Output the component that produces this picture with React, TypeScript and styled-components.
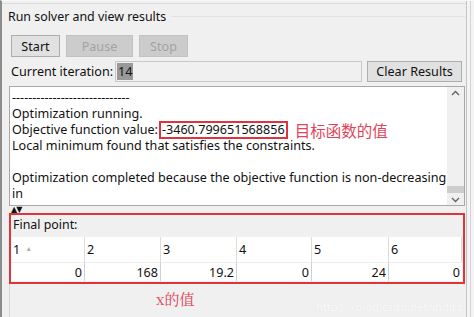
import React from 'react'
import styled, { createGlobalStyle } from 'styled-components'

const GlobalStyle = createGlobalStyle`
  html, body {
    margin: 0;
    padding: 0;
    background: #f0f0f0;
  }
  body {
    font-family: "Noto Sans", "Open Sans", sans-serif;
    font-size: 12.4px;
    color: #111;
  }
`

const Window = styled.div`
  position: relative;
  width: 474px;
  height: 317px;
  overflow: hidden;
  box-sizing: border-box;
  background: #f0f0f0;
  border-left: 2px solid #8c8c8c;
  border-top: 1px solid #f8f8f8;
`

const Edge = styled.div`
  position: absolute;
  top: 0;
  bottom: 0;
  right: 0;
  width: 7px;
  border-left: 1px solid #c4c4c4;
  background: #f4f4f4;
  &::after {
    content: '';
    position: absolute;
    top: 0;
    bottom: 0;
    left: 3px;
    border-left: 1px solid #d4d4d4;
  }
`

const Inner = styled.div`
  width: 463px;
  padding-left: 6px;
  box-sizing: border-box;
  white-space: nowrap;
`

const TopRule = styled.div`
  height: 2px;
  border-bottom: 1px solid #dcdcdc;
  margin-left: -6px;
`

const TitleRow = styled.div`
  display: flex;
  align-items: center;
  gap: 6px;
  height: 24px;
  &::after {
    content: '';
    flex: 1;
    border-top: 1px solid #e0e0e0;
  }
`

const ButtonRow = styled.div`
  display: flex;
  gap: 6px;
  margin-top: 7px;
  padding-left: 3px;
`

const Button = styled.button<{ $disabled?: boolean; $w: number }>`
  width: ${p => p.$w}px;
  height: 22px;
  box-sizing: border-box;
  padding: 0;
  font-family: inherit;
  font-size: 12.6px;
  background: ${p => (p.$disabled ? '#cccccc' : '#e1e1e1')};
  border: 1px solid ${p => (p.$disabled ? '#c2c2c2' : '#adadad')};
  color: ${p => (p.$disabled ? '#a3a3a3' : '#111')};
`

const IterRow = styled.div`
  display: flex;
  align-items: center;
  margin-top: 4px;
  padding-left: 3px;
  height: 21px;
`

const Label = styled.span`
  width: 104px;
  font-size: 12.6px;
`

const Field = styled.div`
  width: 247px;
  height: 21px;
  box-sizing: border-box;
  border: 1px solid #c8c8c8;
  background: #f0f0f0;
  display: flex;
  align-items: center;
  padding-left: 1px;
`

const Selected = styled.span`
  background: #999999;
  color: #111;
  padding: 0 1px;
  line-height: 17px;
  font-size: 12.6px;
`

const ClearButton = styled(Button)`
  margin-left: 5px;
  height: 21px;
`

const Output = styled.div`
  margin-top: 4px;
  margin-left: 1px;
  height: 120px;
  box-sizing: border-box;
  border: 1px solid #a8a8a8;
  background: #fff;
  display: flex;
`

const OutputText = styled.div`
  flex: 1;
  padding: 3px 0 0 2px;
  font-size: 12.6px;
  line-height: 16px;
  overflow: hidden;
`

const Line = styled.div`
  display: flex;
  align-items: center;
  height: 16px;
`

const ValueBox = styled.span`
  border: 2px solid #e0343c;
  padding: 0 1px;
  line-height: 14px;
  margin-left: 1px;
`

const Note = styled.span`
  color: #e2445a;
  font-family: "Noto Sans CJK SC", sans-serif;
  font-size: 15.5px;
  margin-left: 7px;
`

const Scrollbar = styled.div`
  width: 17px;
  background: #f0f0f0;
  display: flex;
  flex-direction: column;
  align-items: center;
  justify-content: space-between;
  padding: 3px 0 2px;
  box-sizing: border-box;
`

const Thumb = styled.div`
  width: 17px;
  height: 7px;
  background: #cdcdcd;
  margin-top: auto;
  margin-bottom: 4px;
`

const Splitter = styled.div`
  height: 7px;
  padding-left: 3px;
  display: flex;
  align-items: center;
  font-family: "DejaVu Sans", sans-serif;
  font-size: 8px;
  line-height: 7px;
  letter-spacing: -1px;
`

const FinalBox = styled.div`
  margin-left: 1px;
  height: 71px;
  box-sizing: border-box;
  border: 2px solid #e0343c;
  background: #f0f0f0;
`

const FinalTitle = styled.div`
  height: 22px;
  line-height: 20px;
  padding-left: 2px;
`

const Table = styled.div`
  display: grid;
  grid-template-columns: 74px 76px 76px 75px 77px 1fr;
  background: #fff;
  margin-right: 1px;
`

const HeadCell = styled.div`
  height: 25px;
  display: flex;
  align-items: center;
  padding-left: 2px;
  font-size: 12.6px;
  border-right: 1px solid #dcdcdc;
  &:last-of-type {
    border-right: none;
  }
`

const SortMark = styled.span`
  color: #b0b0b0;
  font-size: 7px;
  margin-left: 5px;
  margin-top: -3px;
`

const DataCell = styled.div`
  height: 18px;
  display: flex;
  align-items: center;
  justify-content: flex-end;
  padding-right: 2px;
  font-size: 12.6px;
  border-top: 1px solid #ececec;
  border-right: 1px solid #d0d0d0;
  &:last-of-type {
    border-right: none;
  }
`

const Bottom = styled.div`
  position: relative;
  height: 34px;
  margin-left: 1px;
  border-left: 1px solid #d6d6d6;
  display: flex;
  justify-content: space-between;
`

const XNote = styled.span`
  color: #e2445a;
  font-family: "Noto Serif CJK SC", "Noto Sans CJK SC", serif;
  font-size: 15px;
  margin: 4px 0 0 146px;
`

const Watermark = styled.span`
  position: absolute;
  right: 2px;
  bottom: 4px;
  color: #fafafa;
  font-size: 11px;
  letter-spacing: 0.2px;
  text-shadow: 0 0 1px #e0e0e0;
`

const Chevron = ({ up }: { up?: boolean }) => (
  <svg width="9" height="6" viewBox="0 0 9 6">
    <path
      d={up ? 'M1 5 L4.5 1.5 L8 5' : 'M1 1 L4.5 4.5 L8 1'}
      fill="none"
      stroke="#606060"
      strokeWidth="1.3"
    />
  </svg>
)

const heads = ['1', '2', '3', '4', '5', '6']
const values = ['0', '168', '19.2', '0', '24', '0']

export default function App() {
  return (
    <>
      <GlobalStyle />
      <Window>
        <TopRule />
        <Inner>
          <TitleRow>Run solver and view results</TitleRow>
          <ButtonRow>
            <Button $w={49}>Start</Button>
            <Button $w={67} $disabled>Pause</Button>
            <Button $w={49} $disabled>Stop</Button>
          </ButtonRow>
          <IterRow>
            <Label>Current iteration:</Label>
            <Field>
              <Selected>14</Selected>
            </Field>
            <ClearButton $w={95}>Clear Results</ClearButton>
          </IterRow>
          <Output>
            <OutputText>
              <Line>-----------------------------</Line>
              <Line>Optimization running.</Line>
              <Line>
                Objective function value:
                <ValueBox>-3460.799651568856</ValueBox>
                <Note>目标函数的值</Note>
              </Line>
              <Line>Local minimum found that satisfies the constraints.</Line>
              <Line />
              <Line>Optimization completed because the objective function is non-decreasing</Line>
              <Line>in</Line>
            </OutputText>
            <Scrollbar>
              <Chevron up />
              <Thumb />
              <Chevron />
            </Scrollbar>
          </Output>
          <Splitter>▲▼</Splitter>
          <FinalBox>
            <FinalTitle>Final point:</FinalTitle>
            <Table>
              {heads.map((h, i) => (
                <HeadCell key={h}>
                  {h}
                  {i === 0 && <SortMark>▲</SortMark>}
                </HeadCell>
              ))}
              {values.map((v, i) => (
                <DataCell key={i}>{v}</DataCell>
              ))}
            </Table>
          </FinalBox>
          <Bottom>
            <XNote>x的值</XNote>
            <Watermark>https://blog.csdn.net/indira</Watermark>
          </Bottom>
        </Inner>
        <Edge />
      </Window>
    </>
  )
}
